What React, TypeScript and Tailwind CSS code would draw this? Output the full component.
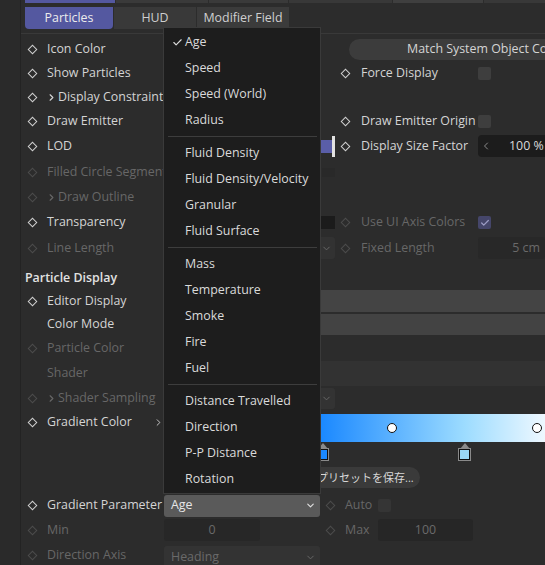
import { Check, ChevronDown, ChevronRight, ChevronLeft } from "lucide-react";
import type { ReactNode } from "react";

const ON = "text-[#d4d4d4]";
const OFF = "text-[#676767]";

function Diamond({ dim }: { dim?: boolean }) {
  return (
    <span
      className={`block w-[7px] h-[7px] rotate-45 border-[1.5px] ${
        dim ? "border-[#4c4c4c]" : "border-[#d0d0d0]"
      }`}
    />
  );
}

// left label block: x 21 -> 164
function Left({
  text,
  dim,
  noDiamond,
  arrow,
  sub,
}: {
  text: string;
  dim?: boolean;
  noDiamond?: boolean;
  arrow?: boolean;
  sub?: boolean;
}) {
  return (
    <div className="flex items-center w-[143px] shrink-0 h-full">
      <div className="w-[22px] shrink-0 flex justify-center">{!noDiamond && <Diamond dim={dim} />}</div>
      <div
        className={`flex-1 flex items-center pl-[4px] py-[3px] whitespace-nowrap overflow-hidden ${
          dim ? OFF : ON
        }`}
      >
        {arrow && <ChevronRight size={11} strokeWidth={2.5} className="mr-[1px] -ml-[1px] shrink-0" />}
        <span className="flex-1">{text}</span>
        {sub && <ChevronRight size={11} strokeWidth={2} className="text-[#cfcfcf] shrink-0" />}
      </div>
    </div>
  );
}

function Right({ text, dim, box, label }: { text: string; dim?: boolean; box: string; label: string }) {
  return (
    <div className="flex items-center shrink-0 h-full">
      <div className={`${box} shrink-0 flex justify-center`}>
        <Diamond dim={dim} />
      </div>
      <div className={`${label} shrink-0 pl-[6px] whitespace-nowrap ${dim ? OFF : ON}`}>{text}</div>
    </div>
  );
}

function Box({ checked, dim }: { checked?: boolean; dim?: boolean }) {
  return (
    <div
      className={`w-[13px] h-[13px] shrink-0 rounded-[2px] flex items-center justify-center ${
        checked ? "bg-[#45466a]" : dim ? "bg-[#353535]" : "bg-[#3e3e3e]"
      }`}
    >
      {checked && <Check size={10} strokeWidth={3} className="text-[#9c9cc4]" />}
    </div>
  );
}

function Row({ h, children }: { h: string; children: ReactNode }) {
  return <div className={`flex items-center shrink-0 ${h}`}>{children}</div>;
}

const menu: (string | null)[] = [
  "Age",
  "Speed",
  "Speed (World)",
  "Radius",
  null,
  "Fluid Density",
  "Fluid Density/Velocity",
  "Granular",
  "Fluid Surface",
  null,
  "Mass",
  "Temperature",
  "Smoke",
  "Fire",
  "Fuel",
  null,
  "Distance Travelled",
  "Direction",
  "P-P Distance",
  "Rotation",
];

export default function App() {
  return (
    <div className="relative w-[545px] h-[565px] overflow-hidden bg-[#2c2c2c] flex font-['Open_Sans','Noto_Sans_CJK_JP',sans-serif] text-[12.4px] leading-none">
      <div className="w-[21px] shrink-0 bg-[#2a2a2a] border-r border-[#232323]" />

      <div className="flex-1 flex flex-col min-w-0">
        {/* cut-off tab strip above */}
        <div className="flex h-[3px] pl-[4px] gap-[1px] shrink-0">
          <div className="w-[90px] bg-[#5458a0]" />
          <div className="w-[92px] bg-[#3a3a3a]" />
          <div className="w-[79px] bg-[#3a3a3a]" />
          <div className="w-[103px] bg-[#383838]" />
          <div className="w-[90px] bg-[#3f3f3f]" />
          <div className="flex-1 bg-[#383838]" />
        </div>

        {/* tabs */}
        <div className="flex h-[22px] mt-[4px] pl-[4px] border-b border-[#393939] pb-[4px] box-content shrink-0">
          <div className="w-[88px] flex items-center justify-center bg-[#5458a0] text-[#ececec] rounded-b-[4px]">
            Particles
          </div>
          <div className="w-[82px] ml-[1px] flex items-center justify-center bg-[#393939] text-[#cfcfcf]">HUD</div>
          <div className="w-[92px] ml-[1px] flex items-center justify-center bg-[#3b3b3b] text-[#cfcfcf]">
            Modifier Field
          </div>
        </div>

        <div className="pt-[3px] flex flex-col">
          <Row h="h-[24px]">
            <Left text="Icon Color" />
            <div className="w-[171px] shrink-0" />
            <div className="pl-[14px] flex items-center shrink-0">
              <div className="w-[272px] h-[21px] shrink-0 rounded-full bg-[#3c3c3c] flex items-center justify-center text-[#d4d4d4] whitespace-nowrap">
                Match System Object Color
              </div>
            </div>
          </Row>
          <Row h="h-[24px]">
            <Left text="Show Particles" />
            <div className="w-[171px] shrink-0" />
            <Right text="Force Display" box="w-[20px]" label="w-[123px]" />
            <Box />
          </Row>
          <Row h="h-[24px]">
            <Left text="Display Constraint" arrow />
          </Row>
          <Row h="h-[24px]">
            <Left text="Draw Emitter" />
            <div className="w-[171px] shrink-0" />
            <Right text="Draw Emitter Origin" box="w-[20px]" label="w-[123px]" />
            <Box />
          </Row>
          <Row h="h-[26px]">
            <Left text="LOD" />
            <div className="w-[171px] shrink-0 flex items-center">
              <div className="w-[168px] h-[13px] bg-[#5a5ea8]" />
              <div className="w-[3px] h-[21px] bg-[#e2e2e2]" />
            </div>
            <Right text="Display Size Factor" box="w-[20px]" label="w-[123px]" />
            <div className="w-[100px] h-[22px] shrink-0 rounded-[4px] bg-[#1c1c1c] flex items-center">
              <ChevronLeft size={12} className="ml-[2px] text-[#8a8a8a]" />
              <span className="ml-[17px] text-[#dadada] whitespace-nowrap">100 %</span>
            </div>
          </Row>
          <Row h="h-[26px]">
            <Left text="Filled Circle Segments" dim />
            <div className="w-[171px] shrink-0 flex justify-end">
              <div className="w-[13px] h-[9px] bg-[#292929]" />
            </div>
          </Row>
          <Row h="h-[25px]">
            <Left text="Draw Outline" dim arrow />
          </Row>
          <Row h="h-[25px]">
            <Left text="Transparency" />
            <div className="w-[171px] shrink-0 flex justify-end">
              <div className="w-[15px] h-[13px] bg-[#1b1b1b]" />
            </div>
            <Right text="Use UI Axis Colors" dim box="w-[20px]" label="w-[123px]" />
            <Box checked />
          </Row>
          <Row h="h-[26px]">
            <Left text="Line Length" dim />
            <div className="w-[171px] shrink-0 h-[22px] bg-[#323232] rounded-[3px] flex items-center justify-end pr-[3px]">
              <ChevronDown size={11} className="text-[#6a6a6a]" />
            </div>
            <Right text="Fixed Length" dim box="w-[20px]" label="w-[123px]" />
            <div className="w-[67px] shrink-0 h-[22px] bg-[#282828] rounded-[3px] flex items-center justify-end pr-[5px] text-[#6a6a6a]">
              5 cm
            </div>
          </Row>

          <div className="h-[24px] mt-[5px] flex items-center pl-[4px] font-semibold text-[#e2e2e2] shrink-0">
            Particle Display
          </div>

          <Row h="h-[22px]">
            <Left text="Editor Display" />
            <div className="flex-1 h-[22px] bg-[#444444]" />
          </Row>
          <Row h="h-[24px]">
            <Left text="Color Mode" noDiamond />
            <div className="flex-1 h-[21px] bg-[#434343]" />
          </Row>
          <Row h="h-[25px]">
            <Left text="Particle Color" dim />
          </Row>
          <Row h="h-[25px]">
            <Left text="Shader" dim noDiamond />
            <div className="flex-1 h-[25px] bg-[#323232]" />
          </Row>
          <Row h="h-[24px]">
            <Left text="Shader Sampling" dim arrow />
            <div className="w-[171px] shrink-0 h-[21px] bg-[#333333] rounded-[3px] flex items-center justify-end pr-[3px]">
              <ChevronDown size={11} className="text-[#6a6a6a]" />
            </div>
          </Row>

          {/* gradient */}
          <div className="flex h-[84px] shrink-0">
            <div className="h-[24px] flex">
              <Left text="Gradient Color" sub />
            </div>
            <div className="flex-1 flex flex-col">
              <div className="relative mt-[4px] h-[28px] bg-[linear-gradient(90deg,#0c7cff_0%,#1a88ff_41%,#9ddcff_79%,#eef8ff_100%)]">
                <span className="absolute left-[223px] top-[9px] w-[10px] h-[10px] rounded-full bg-white border-[1.5px] border-[#111]" />
                <span className="absolute left-[368px] top-[9px] w-[10px] h-[10px] rounded-full bg-white border-[1.5px] border-[#111]" />
              </div>
              <div className="relative h-[19px]">
                <div className="absolute left-[153px] top-[1px] flex flex-col items-center">
                  <div className="w-0 h-0 border-x-[5px] border-x-transparent border-b-[6px] border-b-[#8a8a8a]" />
                  <div className="w-[11px] h-[11px] bg-[#1a88ff] border border-[#111] outline outline-[#8a8a8a]" />
                </div>
                <div className="absolute left-[295px] top-[1px] flex flex-col items-center">
                  <div className="w-0 h-0 border-x-[5px] border-x-transparent border-b-[6px] border-b-[#8a8a8a]" />
                  <div className="w-[11px] h-[11px] bg-[#9ad8f6] border border-[#111] outline outline-[#8a8a8a]" />
                </div>
              </div>
              <div className="mt-[6px] flex">
                <div className="ml-[120px] w-[136px] h-[21px] rounded-full bg-[#3a3a3a] flex items-center pl-[33px] text-[11px] text-[#d8d8d8] whitespace-nowrap">
                  プリセットを保存...
                </div>
              </div>
            </div>
          </div>

          <Row h="h-[23px]">
            <Left text="Gradient Parameter" />
            <div className="w-[157px] shrink-0 flex">
              <div className="w-[156px] h-[22px] bg-[#5a5a5a] rounded-[3px] flex items-center pl-[7px] pr-[4px] text-[#e6e6e6]">
                <span className="flex-1">Age</span>
                <ChevronDown size={11} strokeWidth={2.5} className="text-[#e0e0e0]" />
              </div>
            </div>
            <Right text="Auto" dim box="w-[18px]" label="w-[39px]" />
            <Box dim />
          </Row>
          <Row h="h-[26px]">
            <Left text="Min" dim />
            <div className="w-[157px] shrink-0 flex">
              <div className="w-[96px] h-[22px] bg-[#272727] rounded-[3px] flex items-center justify-center text-[#6a6a6a]">
                0
              </div>
            </div>
            <Right text="Max" dim box="w-[18px]" label="w-[39px]" />
            <div className="w-[95px] shrink-0 h-[22px] bg-[#262626] rounded-[3px] flex items-center justify-center text-[#6a6a6a]">
              100
            </div>
          </Row>
          <Row h="h-[25px]">
            <Left text="Direction Axis" dim />
            <div className="w-[156px] shrink-0 h-[22px] mt-[3px] bg-[#333333] rounded-[3px] flex items-center pl-[7px] pr-[4px] text-[#6a6a6a]">
              <span className="flex-1">Heading</span>
              <ChevronDown size={11} className="text-[#6a6a6a]" />
            </div>
          </Row>
        </div>
      </div>

      {/* open dropdown menu */}
      <div className="absolute left-[163px] top-[27px] w-[158px] h-[467px] bg-[#1d1d1d] border border-[#3a3a3a] pt-[1px]">
        {menu.map((m, i) =>
          m === null ? (
            <div key={i} className="h-[7px] flex items-center pl-[4px] pr-[3px]">
              <div className="w-full h-px bg-[#3d3d3d]" />
            </div>
          ) : (
            <div key={i} className="h-[26px] flex items-center text-[#dadada] whitespace-nowrap">
              <div className="w-[21px] flex justify-end pr-[2px]">
                {m === "Age" && <Check size={11} strokeWidth={2.5} className="text-[#dadada]" />}
              </div>
              {m}
            </div>
          )
        )}
      </div>
    </div>
  );
}
